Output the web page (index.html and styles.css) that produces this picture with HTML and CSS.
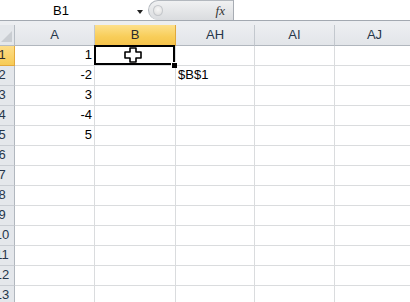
FILE: index.html
```html
<!DOCTYPE html>
<html>
<head>
<meta charset="utf-8">
<link rel="stylesheet" href="styles.css">
</head>
<body>
<div class="topbar">
  <div class="namebox"><span class="nb-text">B1</span><span class="nb-arrow"></span></div>
  <div class="fxzone"><span class="knob"></span><span class="fx">fx</span></div>
  <div class="formula"></div>
</div>
<div class="gap"></div>
<div class="sheet">
  <div class="corner"><svg width="11" height="11" viewBox="0 0 11 11"><polygon points="11,0 11,11 0,11" fill="#c9cdd2"/></svg></div>
  <div class="h">A</div><div class="h sel">B</div><div class="h">AH</div><div class="h">AI</div><div class="h">AJ</div>

  <div class="rh sel">1</div><div class="c n">1</div><div class="c"></div><div class="c"></div><div class="c"></div><div class="c"></div>
  <div class="rh">2</div><div class="c n">-2</div><div class="c"></div><div class="c">$B$1</div><div class="c"></div><div class="c"></div>
  <div class="rh">3</div><div class="c n">3</div><div class="c"></div><div class="c"></div><div class="c"></div><div class="c"></div>
  <div class="rh">4</div><div class="c n">-4</div><div class="c"></div><div class="c"></div><div class="c"></div><div class="c"></div>
  <div class="rh">5</div><div class="c n">5</div><div class="c"></div><div class="c"></div><div class="c"></div><div class="c"></div>
  <div class="rh">6</div><div class="c"></div><div class="c"></div><div class="c"></div><div class="c"></div><div class="c"></div>
  <div class="rh">7</div><div class="c"></div><div class="c"></div><div class="c"></div><div class="c"></div><div class="c"></div>
  <div class="rh">8</div><div class="c"></div><div class="c"></div><div class="c"></div><div class="c"></div><div class="c"></div>
  <div class="rh">9</div><div class="c"></div><div class="c"></div><div class="c"></div><div class="c"></div><div class="c"></div>
  <div class="rh">10</div><div class="c"></div><div class="c"></div><div class="c"></div><div class="c"></div><div class="c"></div>
  <div class="rh">11</div><div class="c"></div><div class="c"></div><div class="c"></div><div class="c"></div><div class="c"></div>
  <div class="rh">12</div><div class="c"></div><div class="c"></div><div class="c"></div><div class="c"></div><div class="c"></div>
  <div class="rh">13</div><div class="c"></div><div class="c"></div><div class="c"></div><div class="c"></div><div class="c"></div>

  <div class="selbox"></div>
  <div class="handle"></div>
  <svg class="cursor" width="18" height="16" viewBox="0 0 18 16">
    <path d="M6 1 H12 V5 H17 V11 H12 V15 H6 V11 H1 V5 H6 Z" fill="#fff" stroke="#000" stroke-width="1.6" stroke-linejoin="round"/>
  </svg>
</div>
</body>
</html>
```

FILE: styles.css
```css
html, body {
  margin: 0;
  padding: 0;
  background: #fff;
}
body {
  width: 410px;
  height: 302px;
  overflow: hidden;
  font-family: "Liberation Sans", Arial, sans-serif;
  font-size: 13px;
  color: #000;
}
.topbar {
  display: flex;
  height: 20px;
  border-bottom: 1px solid #a3a9b1;
  background: #fff;
}
.namebox {
  width: 148px;
  display: flex;
  align-items: flex-start;
  background: #fff;
}
.nb-text {
  padding-left: 53px;
  padding-top: 2px;
  line-height: 18px;
}
.nb-arrow {
  margin-left: auto;
  margin-right: 5px;
  margin-top: 10px;
  width: 0;
  height: 0;
  border-left: 3.5px solid transparent;
  border-right: 3.5px solid transparent;
  border-top: 4px solid #222;
}
.fxzone {
  width: 85px;
  box-sizing: border-box;
  display: flex;
  align-items: center;
  background: linear-gradient(#f0f1f2, #dadcdf);
  border: 1px solid #b3b8be;
  border-right: none;
  border-bottom: none;
  border-radius: 10px 0 0 10px;
}
.knob {
  width: 10px;
  height: 11px;
  margin-left: 4px;
  border-radius: 50%;
  background: radial-gradient(circle at 50% 40%, #f7f7f7 0%, #e3e3e3 60%, #c7c9cc 100%);
  box-shadow: inset 0 0 0 1px #c5c8cc;
}
.fx {
  margin-left: auto;
  margin-right: 8px;
  font-family: "Liberation Serif", "Times New Roman", serif;
  font-style: italic;
  font-size: 13px;
  color: #333;
  line-height: 18px;
}
.formula {
  flex: 1;
  background: #fff;
  border-left: 1px solid #a7acb3;
}
.gap {
  height: 4px;
  background: #eceef1;
}
.sheet {
  position: relative;
  margin-left: -10px;
  display: grid;
  grid-template-columns: 25px 80px 81px 79px 80px 80px;
  grid-template-rows: 21px;
  grid-auto-rows: 20px;
}
.corner {
  background: #e4e7eb;
  border-right: 1px solid #b6bcc3;
  border-bottom: 1px solid #b6bcc3;
  box-sizing: border-box;
  display: flex;
  justify-content: flex-end;
  align-items: flex-end;
  padding: 0 2px 3px 0;
}
.corner svg { display: block; }
.h {
  background: linear-gradient(#eceef1, #e2e5e9);
  border-right: 1px solid #c3c8ce;
  border-bottom: 1px solid #b1b7be;
  box-sizing: border-box;
  text-align: center;
  line-height: 20px;
  color: #26364a;
}
.h.sel {
  background: linear-gradient(#fde08c, #f8cd58 60%, #f5c34d);
  border-right: 1px solid #e0a93c;
  border-bottom: 1px solid #e3a93c;
  color: #2b2b2b;
}
.rh {
  background: #e4e7eb;
  border-right: 1px solid #b1b7be;
  border-bottom: 1px solid #c9cdd3;
  box-sizing: border-box;
  text-align: center;
  line-height: 17px;
  color: #26364a;
}
.rh.sel {
  background: linear-gradient(#fddd88, #f7cb55);
  border-right: 1px solid #e3a93c;
  border-bottom: 1px solid #e3a93c;
  color: #2b2b2b;
}
.c {
  border-right: 1px solid #dadcde;
  border-bottom: 1px solid #dadcde;
  box-sizing: border-box;
  line-height: 17px;
  padding: 0 2px;
  white-space: nowrap;
}
.c.n {
  text-align: right;
}
.selbox {
  position: absolute;
  left: 104px;
  top: 20px;
  width: 81px;
  height: 20px;
  box-sizing: border-box;
  border: 2px solid #000;
}
.handle {
  position: absolute;
  left: 182px;
  top: 38px;
  width: 5px;
  height: 5px;
  background: #000;
  box-shadow: -1px -1px 0 #fff;
}
.cursor {
  position: absolute;
  left: 134px;
  top: 22px;
  display: block;
}
```
